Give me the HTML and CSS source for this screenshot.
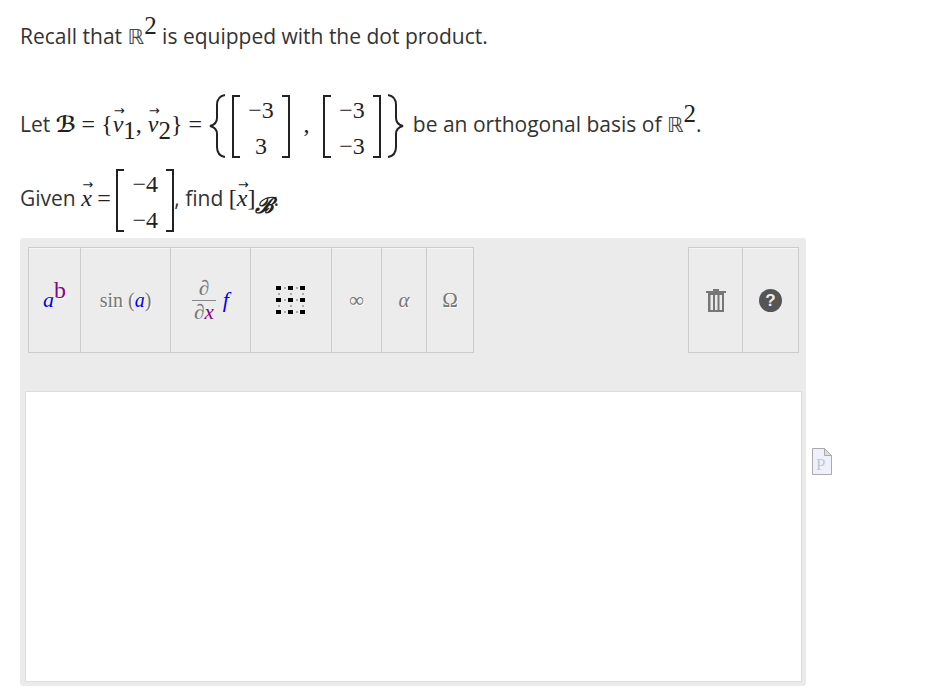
FILE: index.html
```html
<!DOCTYPE html>
<html lang="en">
<head>
  <meta charset="UTF-8" />
  <title>Orthogonal basis question</title>
  <link rel="stylesheet" href="styles.css">
</head>
<body>
  <div class="question">
    <p class="line line-recall">Recall that <span class="bb">ℝ</span><sup class="pow">2</sup> is equipped with the dot product.</p>

    <p class="line line-basis">Let <span class="cal">ℬ</span> <span class="math">= {<span class="vec"><i>v</i></span><sub>1</sub>, <span class="vec"><i>v</i></span><sub>2</sub>} =</span>
      <svg class="brace" width="19" height="64" viewBox="0 0 19 64"><path d="M17 1C11 2 9 6 9 11V24C9 28 6 31 2 32C6 33 9 36 9 40V53C9 58 11 62 17 63" fill="none" stroke="#222" stroke-width="2"/></svg>
      <span class="matrix"><span>−3</span><span>3</span></span>
      <span class="math comma">,</span>
      <span class="matrix"><span>−3</span><span>−3</span></span>
      <svg class="brace" width="19" height="64" viewBox="0 0 19 64"><path d="M2 1C8 2 10 6 10 11V24C10 28 13 31 17 32C13 33 10 36 10 40V53C10 58 8 62 2 63" fill="none" stroke="#222" stroke-width="2"/></svg>
      <span class="after-brace">be an orthogonal basis of <span class="bb">ℝ</span><sup class="pow">2</sup>.</span></p>

    <p class="line line-given">Given <span class="vec vec-wide"><i class="math">x</i></span> <span class="math">=</span>
      <span class="matrix"><span>−4</span><span>−4</span></span>, find <span class="math">[<span class="vec vec-wide"><i>x</i></span>]</span><sub class="cal cal-sub">ℬ</sub>.</p>
  </div>

  <div class="editor-row">
    <div class="editor">
      <div class="toolbar">
        <div class="btn-group">
          <button class="tool w-53"><span class="sym"><i class="blue">a</i><sup class="purple">b</sup></span></button>
          <button class="tool w-90"><span class="sym small">sin (<i class="blue">a</i>)</span></button>
          <button class="tool w-80">
            <span class="frac"><span>∂</span><span class="den">∂<i class="purple">x</i></span></span>
            <i class="blue fn">f</i>
          </button>
          <button class="tool w-81">
            <svg width="32" height="32" viewBox="0 0 32 32">
              <g fill="#000"><rect x="1" y="2" width="5" height="4"/><rect x="13" y="2" width="5" height="4"/><rect x="25" y="2" width="5" height="4"/><rect x="1" y="14" width="5" height="4"/><rect x="13" y="14" width="5" height="4"/><rect x="25" y="14" width="5" height="4"/><rect x="1" y="26" width="5" height="4"/><rect x="13" y="26" width="5" height="4"/><rect x="25" y="26" width="5" height="4"/></g>
              <g fill="#aaa"><rect x="9" y="3" width="2" height="2"/><rect x="21" y="3" width="2" height="2"/><rect x="9" y="15" width="2" height="2"/><rect x="21" y="15" width="2" height="2"/><rect x="9" y="27" width="2" height="2"/><rect x="21" y="27" width="2" height="2"/><rect x="3" y="9" width="2" height="2"/><rect x="15" y="9" width="2" height="2"/><rect x="27" y="9" width="2" height="2"/><rect x="3" y="21" width="2" height="2"/><rect x="15" y="21" width="2" height="2"/><rect x="27" y="21" width="2" height="2"/></g>
            </svg>
          </button>
          <button class="tool w-50"><span class="sym grey">∞</span></button>
          <button class="tool w-45"><span class="sym grey"><i>α</i></span></button>
          <button class="tool w-47"><span class="sym grey">Ω</span></button>
        </div>
        <div class="btn-group">
          <button class="tool w-55">
            <svg width="22" height="26" viewBox="0 0 22 26">
              <path d="M1 4H21V6H1ZM8 4V2H14V4Z" fill="#777"/>
              <path d="M3 6H19V25H3Z" fill="#777"/>
              <path d="M5.500 8H8V23H5.500ZM10 8H12.500V23H10ZM14.500 8H17V23H14.500Z" fill="#ebebeb"/>
            </svg>
          </button>
          <button class="tool w-56"><span class="help">?</span></button>
        </div>
      </div>
      <div class="answer"></div>
    </div>
    <svg class="page-icon" width="20" height="27" viewBox="0 0 20 27">
      <path d="M.5.500H12.500L19.500 7.500V26.500H.5Z" fill="#eef0fc" stroke="#aaa"/>
      <path d="M12.500.500V7.500H19.500Z" fill="#ddd" stroke="#aaa"/>
      <text x="4" y="22" font-family="Liberation Serif" font-size="17" fill="#c4c6d2">P</text>
    </svg>
  </div>
</body>
</html>
```
FILE: styles.css
```css
html, body { margin: 0; background: #fff; }
body {
  font-family: "Open Sans", sans-serif;
  font-size: 21px;
  color: #333;
  padding: 14px 0 0 20px;
  width: 909px;
  height: 684px;
  overflow: hidden;
}

/* question text */
.line { margin: 0; white-space: nowrap; }
.line-recall { height: 44px; line-height: 44px; margin-bottom: 28px; }
.line-basis { height: 76px; line-height: 76px; margin-bottom: 4px; }
.line-given { height: 64px; line-height: 64px; margin-bottom: 8px; }

.math, .matrix, .pow, sub, .bb { font-family: "Liberation Serif", "DejaVu Serif", serif; }
.math { font-size: 24px; color: #222; }
.bb { font-family: "DejaVu Sans", sans-serif; font-size: 21px; color: #444; }
.cal { font-family: "DejaVu Serif", "DejaVu Sans", serif; font-style: italic; font-weight: bold; font-size: 22px; color: #222; }
.pow { font-size: 25px; line-height: 0; vertical-align: 10px; color: #222; }
sub { font-size: 25px; line-height: 0; vertical-align: -7px; color: #222; }
.cal-sub { font-family: "DejaVu Serif", serif; font-size: 22px; }

.vec { position: relative; display: inline-block; line-height: 1; }
.vec::before {
  content: "→";
  position: absolute;
  top: -9px;
  left: 1px;
  font: 13px "DejaVu Sans", sans-serif;
  color: #222;
}

.matrix {
  display: inline-grid;
  vertical-align: middle;
  grid-auto-rows: 31px;
  row-gap: 5px;
  justify-items: center;
  align-items: center;
  width: 58px;
  height: 63px;
  box-sizing: border-box;
  font-size: 24px;
  line-height: 1;
  color: #222;
  position: relative;
}
.matrix::before, .matrix::after {
  content: "";
  position: absolute;
  top: 0;
  bottom: 0;
  width: 6px;
  border: 2px solid #222;
}
.matrix::before { left: 0; border-right: 0; }
.matrix::after { right: 0; border-left: 0; }

.brace { vertical-align: middle; }
.comma { margin: 0 8px; }
.after-brace { margin-left: 2px; }

/* editor */
.editor-row { display: flex; gap: 6px; align-items: flex-start; }
.editor {
  width: 786px;
  height: 448px;
  box-sizing: border-box;
  padding: 9px 4px 4px 5px;
  background: #ebebeb;
  border-radius: 3px;
}
.toolbar { display: flex; justify-content: space-between; padding: 0 3px; height: 144px; }
.btn-group { display: flex; height: 106px; }
.tool {
  display: flex;
  align-items: center;
  justify-content: center;
  gap: 7px;
  height: 106px;
  padding: 0;
  background: #ececec;
  border: 1px solid #ccc;
  border-left-width: 0;
  font-family: "Liberation Serif", serif;
  box-shadow: inset 0 1px 0 #f6f6f6;
}
.tool:first-child { border-left-width: 1px; }
.w-53 { width: 53px; }
.w-90 { width: 90px; }
.w-80 { width: 80px; }
.w-81 { width: 81px; }
.w-50 { width: 50px; }
.w-45 { width: 45px; }
.w-47 { width: 47px; }
.w-55 { width: 55px; }
.w-56 { width: 56px; }

.sym { font-size: 22px; color: #777; text-shadow: 1px 1px 0 #fff; }
.sym.small { font-size: 20px; }
.sym.grey { font-size: 21px; }
.sym sup { font-size: 24px; line-height: 0; vertical-align: 9px; }
.blue { color: #00f; }
.purple { color: #808; }
.fn { font-size: 22px; }
.frac { display: flex; flex-direction: column; align-items: center; font-size: 21px; line-height: 23px; color: #777; }
.den { border-top: 1px solid #888; padding: 0 2px; }
.help {
  width: 23px;
  height: 23px;
  border-radius: 50%;
  background: #555;
  color: #eee;
  font: bold 17px/23px "Liberation Sans", sans-serif;
  text-align: center;
}
.answer {
  height: 291px;
  box-sizing: border-box;
  background: #fff;
  border: 1px solid #ddd;
}
.page-icon { margin-top: 210px; }
```
